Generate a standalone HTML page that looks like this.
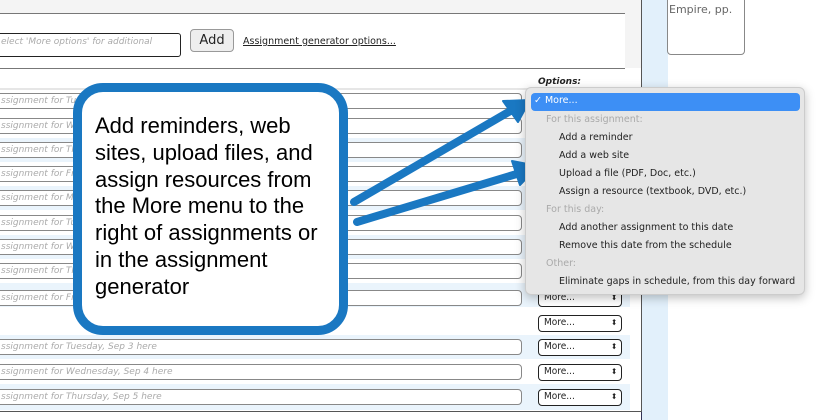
<!DOCTYPE html>
<html><head><meta charset="utf-8"><style>
*{box-sizing:border-box;margin:0;padding:0}
body{width:840px;height:420px;overflow:hidden;background:#fff;font-family:"DejaVu Sans","Liberation Sans",sans-serif;position:relative}
.abs{position:absolute}
.row{position:absolute;left:0;width:630px;height:24px}
.inp{position:absolute;left:-10px;width:532px;height:16px;border:1px solid #888;border-radius:4px;background:#fff;font-size:9px;font-style:italic;color:#aaa;padding-left:10px;line-height:14px;white-space:nowrap;overflow:hidden}
.sel{position:absolute;left:538px;width:84px;height:17px;border:1.5px solid #222;border-radius:4px;background:#fff;font-size:10px;color:#222;padding-left:5px;line-height:14px;font-family:"DejaVu Sans Condensed","DejaVu Sans",sans-serif}
.sel:after{content:"⬍";position:absolute;right:4px;top:0;font-size:8px}
.menu{left:525px;top:87px;width:280px;height:208px;background:#e6e6e6;border:1px solid #ccc;border-radius:6px;box-shadow:0 3px 10px rgba(0,0,0,.25);font-size:9.5px;color:#222}
.menu div{position:absolute;left:33px;white-space:nowrap}
.menu .h{left:20px;color:#aaa}
</style></head><body>
<div class="abs" style="left:0;top:0;width:642px;height:13px;background:#f4f4f4"></div>
<div class="abs" style="left:0;top:13px;width:625px;height:1px;background:#777"></div>
<div class="abs" style="left:0;top:14px;width:625px;height:54px;background:#fff"></div>
<div class="abs" style="left:0;top:68px;width:625px;height:1px;background:#777"></div>
<div class="abs" style="left:625px;top:0;width:16px;height:68px;background:#f4f4f4"></div>
<div class="abs" style="left:641px;top:0;width:27px;height:420px;background:#e2f0fb;border-left:1px solid #335"></div>
<div class="abs" style="left:641px;top:0;width:1px;height:412px;background:#555"></div>
<div class="abs" style="left:0;top:411px;width:641px;height:1px;background:#555"></div>
<div class="abs" style="left:667px;top:-5px;width:78px;height:60px;border:1px solid #888;border-radius:4px;background:#fff;font-size:11px;color:#666;padding:7px 0 0 1px">Empire, pp.</div>
<div class="abs" style="left:-10px;top:33px;width:191px;height:24px;border:1.5px solid #222;border-radius:3px;font-size:9px;font-style:italic;color:#aaa;padding:3px 0 0 10px">elect 'More options' for additional</div>
<div class="abs" style="left:190px;top:29px;width:44px;height:23px;border:1px solid #999;border-radius:4px;background:#eee;font-size:13px;text-align:center;line-height:22px;color:#222">Add</div>
<div class="abs" style="left:243px;top:36px;font-size:9.5px;text-decoration:underline;color:#222">Assignment generator options...</div>
<div class="abs" style="left:538px;top:77px;font-size:9px;font-weight:bold;font-style:italic;color:#222">Options:</div>
<div class="abs" style="left:0;top:88px;width:630px;height:4px;background:#e6e6e6"></div>

<div class="row" style="top:90px;background:#fff"><div class="inp" style="top:3px">ssignment for Tuesday</div></div>
<div class="row" style="top:114px"><div class="inp" style="top:4px">ssignment for Wednesday</div></div>
<div class="row" style="top:138px;background:#eaf4fc"><div class="inp" style="top:4px">ssignment for Thursday</div></div>
<div class="row" style="top:162px"><div class="inp" style="top:4px">ssignment for Friday</div></div>
<div class="row" style="top:186px;background:#eaf4fc"><div class="inp" style="top:4px">ssignment for Monday</div></div>
<div class="row" style="top:211px"><div class="inp" style="top:4px">ssignment for Tuesday</div></div>
<div class="row" style="top:235px;background:#eaf4fc"><div class="inp" style="top:4px">ssignment for Wednesday</div></div>
<div class="row" style="top:259px"><div class="inp" style="top:4px">ssignment for Thursday</div></div>
<div class="row" style="top:283px;background:#eaf4fc"><div class="inp" style="top:7px">ssignment for Friday</div><div class="sel" style="top:7px">More...</div></div>
<div class="row" style="top:311px"><div class="sel" style="top:4px">More...</div></div>
<div class="row" style="top:335px;background:#eaf4fc"><div class="inp" style="top:4px">ssignment for Tuesday, Sep 3 here</div><div class="sel" style="top:4px">More...</div></div>
<div class="row" style="top:360px"><div class="inp" style="top:4px">ssignment for Wednesday, Sep 4 here</div><div class="sel" style="top:4px">More...</div></div>
<div class="row" style="top:384px;background:#eaf4fc;height:26px"><div class="inp" style="top:5px">ssignment for Thursday, Sep 5 here</div><div class="sel" style="top:5px">More...</div></div>

<div class="abs" style="left:73px;top:83px;width:275px;height:252px;border:9px solid #1a78c2;border-radius:30px;background:#fff;padding:21px 0 0 13px;font-family:'Liberation Sans',Arial,sans-serif;font-size:22px;line-height:26.8px;color:#000;white-space:nowrap">Add reminders, web<br>sites, upload files, and<br>assign resources from<br>the More menu to the<br>right of assignments or<br>in the assignment<br>generator</div>

<svg class="abs" style="left:0;top:0" width="840" height="420">
<g fill="#1a78c2" stroke="#1a78c2" stroke-linejoin="round" stroke-linecap="round">
<line x1="354" y1="202" x2="512" y2="110" stroke-width="8"/>
<polygon points="530,100 503,101 518,122" stroke-width="2"/>
<line x1="357" y1="222" x2="520" y2="173" stroke-width="8"/>
<polygon points="538,166 512,161 520,185" stroke-width="2"/>
</g></svg>

<div class="abs menu">
<div style="left:5px;top:5px;width:269px;height:18px;background:#3d8ff5;border-radius:4px;color:#fff;padding:2px 0 0 3px">✓ More...</div>
<div class="h" style="top:26px">For this assignment:</div>
<div style="top:44px">Add a reminder</div>
<div style="top:62px">Add a web site</div>
<div style="top:80px">Upload a file (PDF, Doc, etc.)</div>
<div style="top:98px">Assign a resource (textbook, DVD, etc.)</div>
<div class="h" style="top:116px">For this day:</div>
<div style="top:134px">Add another assignment to this date</div>
<div style="top:152px">Remove this date from the schedule</div>
<div class="h" style="top:170px">Other:</div>
<div style="top:188px">Eliminate gaps in schedule, from this day forward</div>
</div>
</body></html>
